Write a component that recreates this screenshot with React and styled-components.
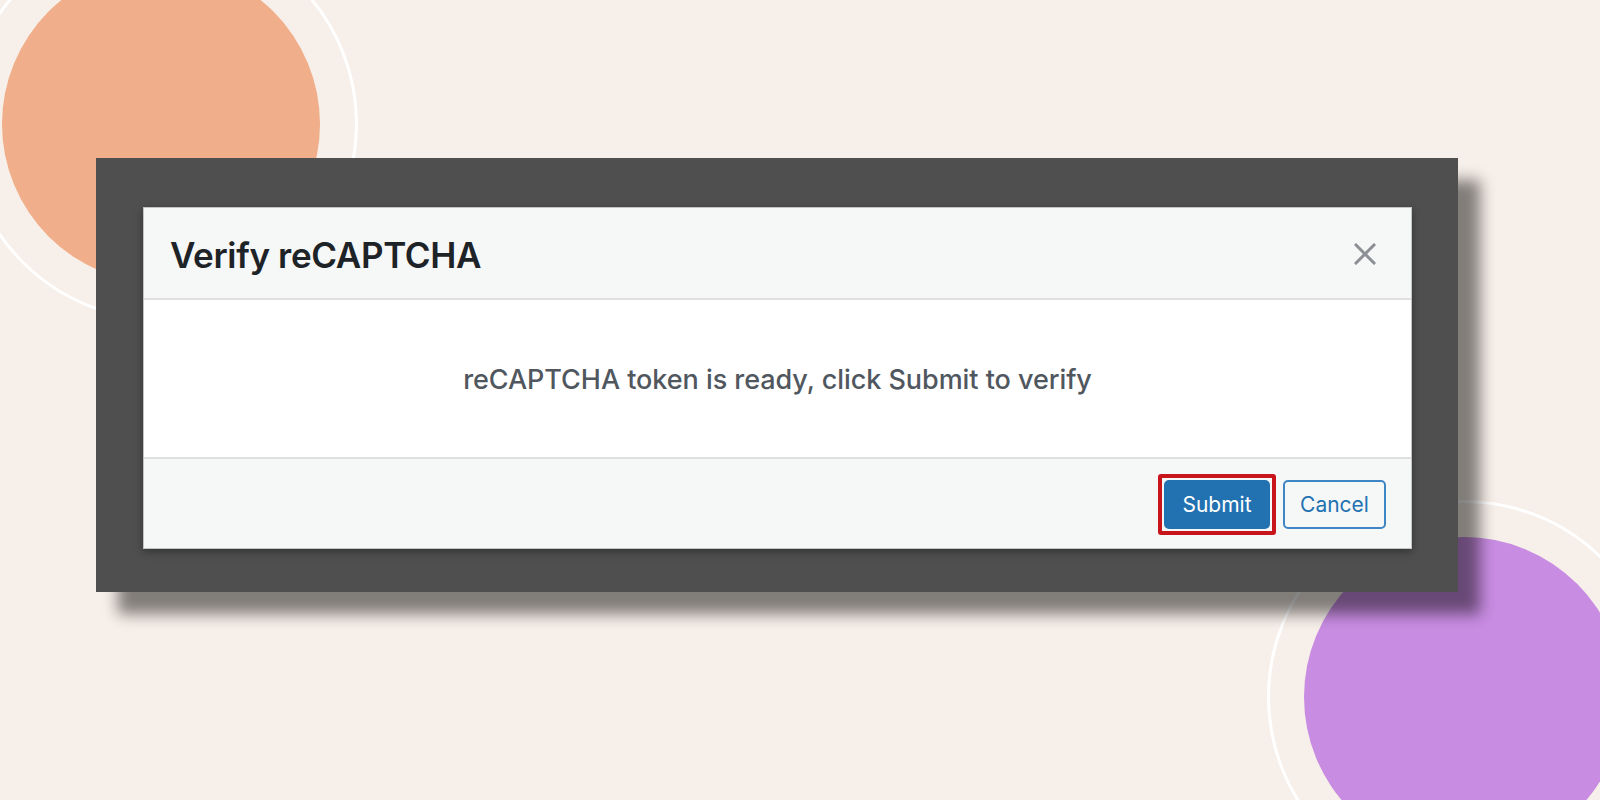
import React from "react";
import styled, { createGlobalStyle } from "styled-components";

const Global = createGlobalStyle`
  html, body {
    margin: 0;
    padding: 0;
    background: #f7efe9;
  }
  body {
    font-family: Inter, "Liberation Sans", Arial, sans-serif;
  }
  * { box-sizing: border-box; }
`;

const Page = styled.div`
  position: relative;
  width: 1600px;
  height: 800px;
  overflow: hidden;
  background: #f7efe9;
  padding: 158px 0 0 96px;
`;

const Blob = styled.div`
  position: absolute;
  left: ${(p) => p.$cx - p.$r}px;
  top: ${(p) => p.$cy - p.$r}px;
  width: ${(p) => p.$r * 2}px;
  height: ${(p) => p.$r * 2}px;
  border-radius: 50%;
  background: ${(p) => p.$fill || "transparent"};
  border: ${(p) => (p.$ring ? "3px solid #ffffff" : "none")};
  z-index: 0;
`;

const Frame = styled.div`
  position: relative;
  z-index: 1;
  width: 1362px;
  height: 434px;
  background: #4f4f4f;
  padding: 49px 46px 43px 47px;
  box-shadow: 22px 22px 14px rgba(0, 0, 0, 0.48);
`;

const Modal = styled.div`
  display: flex;
  flex-direction: column;
  width: 100%;
  height: 100%;
  background: #ffffff;
  border: 1px solid #c3c4c7;
  box-shadow: 0 3px 8px rgba(0, 0, 0, 0.35);
`;

const Header = styled.div`
  display: flex;
  align-items: center;
  justify-content: space-between;
  height: 92px;
  padding: 0 34px 0 26px;
  background: #f6f7f7;
  border-bottom: 2px solid #e0e0e2;
`;

const Title = styled.h1`
  margin: 0;
  font-size: 35px;
  font-weight: 600;
  color: #1d2327;
  letter-spacing: -0.35px;
  line-height: 1;
  padding-top: 4px;
`;

const CloseButton = styled.button`
  display: flex;
  align-items: center;
  justify-content: center;
  width: 24px;
  height: 24px;
  padding: 0;
  margin-top: 2px;
  border: none;
  background: transparent;
  cursor: pointer;
`;

const Body = styled.div`
  flex: 1;
  display: flex;
  align-items: center;
  justify-content: center;
  padding-top: 2px;
  background: #ffffff;
`;

const Message = styled.p`
  margin: 0;
  font-size: 27px;
  font-weight: 500;
  color: #50575e;
  letter-spacing: -0.05px;
`;

const Footer = styled.div`
  display: flex;
  align-items: center;
  justify-content: flex-end;
  gap: 7px;
  height: 91px;
  padding: 2px 25px 0 0;
  background: #f6f7f7;
  border-top: 2px solid #e0e0e2;
`;

const Highlight = styled.span`
  display: flex;
  padding: 2px;
  border: 4px solid #c8141b;
  border-radius: 3px;
`;

const Button = styled.button`
  height: 49px;
  width: ${(p) => p.$w}px;
  border-radius: 5px;
  font-family: Inter, "Liberation Sans", Arial, sans-serif;
  font-size: 21px;
  font-weight: 400;
  cursor: pointer;
  border: 2px solid ${(p) => (p.$primary ? "#2271b1" : "#3f86c4")};
  background: ${(p) => (p.$primary ? "#2271b1" : "#f6f7f7")};
  color: ${(p) => (p.$primary ? "#ffffff" : "#2271b1")};
`;

export default function App() {
  return (
    <>
      <Global />
      <Page>
        <Blob $cx={161} $cy={124} $r={159} $fill="#f0ae8a" />
        <Blob $cx={161} $cy={124} $r={197} $ring />
        <Blob $cx={1464} $cy={697} $r={160} $fill="#c88ce2" />
        <Blob $cx={1464} $cy={697} $r={197} $ring />
        <Frame>
          <Modal>
            <Header>
              <Title>Verify reCAPTCHA</Title>
              <CloseButton aria-label="Close">
                <svg width="22" height="22" viewBox="0 0 22 22">
                  <path
                    d="M2 2 L20 20 M20 2 L2 20"
                    stroke="#8c8f94"
                    strokeWidth="3"
                    strokeLinecap="square"
                    fill="none"
                  />
                </svg>
              </CloseButton>
            </Header>
            <Body>
              <Message>reCAPTCHA token is ready, click Submit to verify</Message>
            </Body>
            <Footer>
              <Highlight>
                <Button $primary $w={106}>
                  Submit
                </Button>
              </Highlight>
              <Button $w={103}>Cancel</Button>
            </Footer>
          </Modal>
        </Frame>
      </Page>
    </>
  );
}
